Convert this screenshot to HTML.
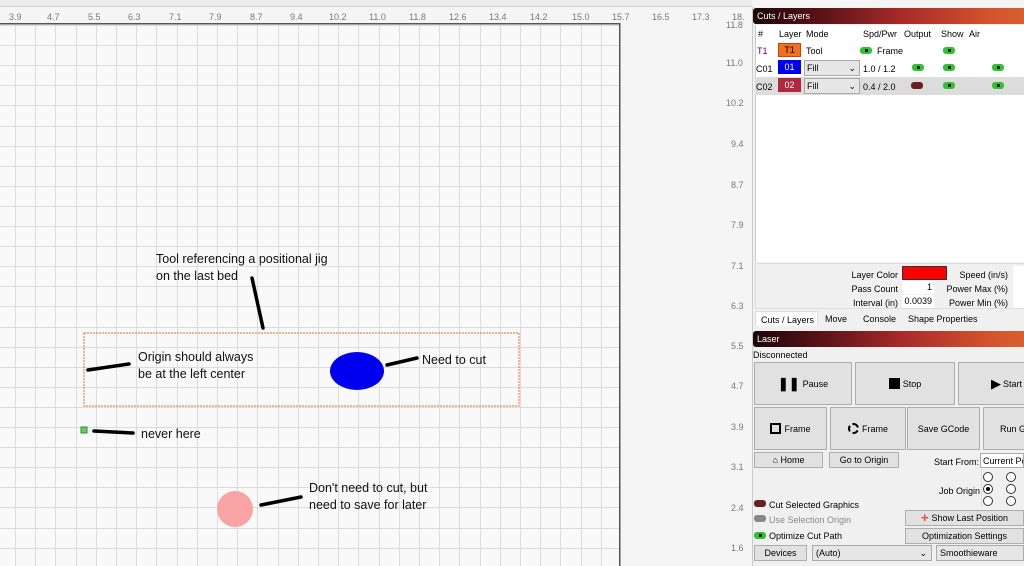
<!DOCTYPE html>
<html><head><meta charset="utf-8"><style>
*{margin:0;padding:0;box-sizing:border-box}
body{width:1024px;height:566px;overflow:hidden;background:#f5f5f5;font-family:"Liberation Sans",sans-serif;font-size:9px;color:#000;position:relative}
.a{position:absolute;white-space:nowrap}
.btn{position:absolute;background:#e1e1e1;border:1px solid #adadad;display:flex;align-items:center;justify-content:center;font-size:9px;white-space:nowrap;overflow:hidden}
.hdr{position:absolute;left:753px;width:271px;height:16px;background:linear-gradient(90deg,#1a0608,#5a1218 25%,#a82a2a 55%,#d0502c 85%,#d86030);color:#fff;font-size:9px;padding:3px 4px;border-radius:3px 0 0 3px}
.tg{position:absolute;width:12px;height:7px;border-radius:3px;background:#2cc62c}
.tg::after{content:"";position:absolute;left:5px;top:2px;width:3px;height:3px;background:#000}
.rad{position:absolute;width:10px;height:10px;border:1px solid #333;border-radius:50%;background:#fff}
.r{text-align:right}
</style></head><body>
<svg class="a" style="left:0;top:0" width="752" height="566" shape-rendering="crispEdges">
<rect x="0" y="0" width="752" height="7" fill="#ececec"/>
<line x1="0" y1="6.5" x2="752" y2="6.5" stroke="#d0d0d0"/>
<rect x="0" y="7" width="752" height="16" fill="#f5f5f5"/>
<rect x="0" y="24" width="620" height="542" fill="#f9f9f9"/>
<g stroke="#dcdcdc" stroke-width="1" id="grid"></g>
<line x1="0" y1="23.5" x2="620" y2="23.5" stroke="#555" stroke-width="1.5"/>
<line x1="619.5" y1="23" x2="619.5" y2="566" stroke="#555" stroke-width="1.5"/>
<g font-size="9" fill="#777" font-family="Liberation Sans">
<text x="9" y="20">3.9</text><text x="47" y="20">4.7</text><text x="88" y="20">5.5</text><text x="128" y="20">6.3</text><text x="169" y="20">7.1</text><text x="209" y="20">7.9</text><text x="250" y="20">8.7</text><text x="290" y="20">9.4</text><text x="329" y="20">10.2</text><text x="369" y="20">11.0</text><text x="409" y="20">11.8</text><text x="449" y="20">12.6</text><text x="489" y="20">13.4</text><text x="530" y="20">14.2</text><text x="572" y="20">15.0</text><text x="612" y="20">15.7</text><text x="652" y="20">16.5</text><text x="692" y="20">17.3</text><text x="732" y="20">18.</text>
<text x="726" y="28">11.8</text><text x="726" y="66">11.0</text><text x="726" y="106">10.2</text><text x="731" y="147">9.4</text><text x="731" y="188">8.7</text><text x="731" y="228">7.9</text><text x="731" y="269">7.1</text><text x="731" y="309">6.3</text><text x="731" y="349">5.5</text><text x="731" y="389">4.7</text><text x="731" y="430">3.9</text><text x="731" y="470">3.1</text><text x="731" y="511">2.4</text><text x="731" y="551">1.6</text>
</g>
<rect x="84" y="333" width="435" height="73" fill="none" stroke="#f07030" stroke-width="1" stroke-dasharray="2,1"/>
<g shape-rendering="auto">
<ellipse cx="357" cy="371" rx="27" ry="19" fill="#0000f0"/>
<circle cx="235" cy="509" r="18" fill="#f8a4a4"/>
<g stroke="#000" stroke-width="3.5" stroke-linecap="round">
<line x1="252" y1="278" x2="263" y2="328"/>
<line x1="88" y1="370" x2="129" y2="364"/>
<line x1="387" y1="365" x2="417" y2="358"/>
<line x1="94" y1="431" x2="133" y2="433"/>
<line x1="261" y1="505" x2="301" y2="497"/>
</g>
<g font-family="Liberation Sans" font-size="12.5" fill="#111">
<text x="156" y="263">Tool referencing a positional jig</text><text x="156" y="280">on the last bed</text>
<text x="138" y="361">Origin should always</text><text x="138" y="378">be at the left center</text>
<text x="422" y="364">Need to cut</text>
<text x="141" y="438">never here</text>
<text x="309" y="492">Don't need to cut, but</text><text x="309" y="509">need to save for later</text>
</g></g>
<rect x="81" y="427" width="6" height="6" fill="#6c6" stroke="#383"/>
</svg>
<script>
(function(){var g=document.getElementById('grid'),s='';
for(var i=0;i<31;i++){var x=Math.round(15+20.2*i)+0.5;if(x<619)s+='<line x1="'+x+'" y1="24" x2="'+x+'" y2="566"/>';}
for(var j=0;j<28;j++){var y=Math.round(25+20.1*j)+0.5;s+='<line x1="0" y1="'+y+'" x2="619" y2="'+y+'"/>';}
g.innerHTML=s;})();
</script>
<div class="a" style="left:752px;top:7px;width:272px;height:559px;background:#f0f0f0;border-left:1px solid #ccc"></div>
<div class="hdr" style="top:8px">Cuts / Layers</div>
<div class="a" style="left:755px;top:25px;width:269px;height:237px;background:#fff;border-left:1px solid #ccc"></div>
<div class="a" style="left:755px;top:77px;width:269px;height:18px;background:#dcdcdc"></div>
<div class="a" style="left:758px;top:29px">#</div>
<div class="a" style="left:779px;top:29px">Layer</div><div class="a" style="left:806px;top:29px">Mode</div>
<div class="a" style="left:863px;top:29px">Spd/Pwr</div><div class="a" style="left:904px;top:29px">Output</div><div class="a" style="left:941px;top:29px">Show</div><div class="a" style="left:969px;top:29px">Air</div>
<div class="a" style="left:757px;top:46px;color:#606">T1</div>
<div class="a" style="left:778px;top:43px;width:23px;height:14px;background:#f07020;border:1px solid #c40;text-align:center;line-height:12px">T1</div>
<div class="a" style="left:806px;top:46px">Tool</div>
<div class="tg" style="left:860px;top:47px"></div><div class="a" style="left:877px;top:46px">Frame</div>
<div class="tg" style="left:943px;top:47px"></div>
<div class="a" style="left:756px;top:64px">C01</div>
<div class="a" style="left:778px;top:60px;width:23px;height:14px;background:#0000f0;color:#fff;text-align:center;line-height:14px">01</div>
<div class="a" style="left:804px;top:60px;width:56px;height:16px;background:#e6e6e6;border:1px solid #aaa;padding:2px 2px">Fill<span style="position:absolute;right:3px">⌄</span></div>
<div class="a" style="left:863px;top:64px">1.0 / 1.2</div>
<div class="tg" style="left:912px;top:64px"></div><div class="tg" style="left:943px;top:64px"></div><div class="tg" style="left:992px;top:64px"></div>
<div class="a" style="left:756px;top:82px">C02</div>
<div class="a" style="left:778px;top:78px;width:23px;height:14px;background:#b02840;color:#fff;text-align:center;line-height:14px">02</div>
<div class="a" style="left:804px;top:78px;width:56px;height:16px;background:#e6e6e6;border:1px solid #aaa;padding:2px 2px">Fill<span style="position:absolute;right:3px">⌄</span></div>
<div class="a" style="left:863px;top:82px">0.4 / 2.0</div>
<div class="a" style="left:911px;top:82px;width:12px;height:7px;border-radius:3px;background:#6a2020"></div>
<div class="tg" style="left:943px;top:82px"></div><div class="tg" style="left:992px;top:82px"></div>
<div class="a" style="left:755px;top:263px;width:269px;height:46px;border:1px solid #ddd;border-right:0"></div>
<div class="a r" style="left:830px;top:270px;width:68px">Layer Color</div>
<div class="a" style="left:902px;top:266px;width:45px;height:14px;background:#f00;border:1px solid #333"></div>
<div class="a r" style="left:940px;top:270px;width:68px">Speed (in/s)</div>
<div class="a r" style="left:830px;top:284px;width:68px">Pass Count</div>
<div class="a" style="left:902px;top:281px;width:32px;height:13px;background:#fff;text-align:right;padding:1px 2px">1</div>
<div class="a r" style="left:930px;top:284px;width:78px">Power Max (%)</div>
<div class="a r" style="left:830px;top:298px;width:68px">Interval (in)</div>
<div class="a" style="left:902px;top:295px;width:32px;height:13px;background:#fff;text-align:right;padding:1px 2px">0.0039</div>
<div class="a r" style="left:930px;top:298px;width:78px">Power Min (%)</div>
<div class="a" style="left:1013px;top:266px;width:11px;height:42px;background:#fff"></div>
<div class="a" style="left:755px;top:311px;width:63px;height:15px;background:#fff;border:1px solid #ddd;border-bottom:0;padding:3px 5px">Cuts / Layers</div>
<div class="a" style="left:825px;top:314px">Move</div><div class="a" style="left:863px;top:314px">Console</div><div class="a" style="left:908px;top:314px">Shape Properties</div>
<div class="hdr" style="top:331px">Laser</div>
<div class="a" style="left:753px;top:350px">Disconnected</div>
<div class="btn" style="left:754px;top:362px;width:98px;height:43px"><b style="font-size:13px;margin-right:3px">❚❚</b>Pause</div>
<div class="btn" style="left:855px;top:362px;width:100px;height:43px"><span style="display:inline-block;width:11px;height:11px;background:#000;margin-right:3px"></span>Stop</div>
<div class="btn" style="left:958px;top:362px;width:70px;height:43px;justify-content:flex-start;padding-left:32px"><span style="font-size:13px;margin-right:2px">▶</span>Start</div>
<div class="btn" style="left:754px;top:407px;width:73px;height:43px"><span style="display:inline-block;width:11px;height:11px;border:2px dashed #000;margin-right:3px"></span>Frame</div>
<div class="btn" style="left:830px;top:407px;width:76px;height:43px"><span style="display:inline-block;width:11px;height:11px;border:2px dashed #000;border-radius:50%;margin-right:3px"></span>Frame</div>
<div class="btn" style="left:907px;top:407px;width:73px;height:43px">Save GCode</div>
<div class="btn" style="left:983px;top:407px;width:45px;height:43px;justify-content:flex-start;padding-left:16px">Run GC</div>
<div class="btn" style="left:754px;top:452px;width:69px;height:16px">⌂ Home</div>
<div class="btn" style="left:829px;top:452px;width:70px;height:16px">Go to Origin</div>
<div class="a" style="left:934px;top:457px">Start From:</div>
<div class="a" style="left:980px;top:453px;width:44px;height:15px;background:#fff;border:1px solid #aaa;padding:2px;overflow:hidden">Current Pos</div>
<div class="a" style="left:981px;top:469px;width:43px;height:38px;border-left:1px solid #ddd"></div>
<div class="rad" style="left:983px;top:472px"></div><div class="rad" style="left:1006px;top:472px"></div>
<div class="rad" style="left:983px;top:484px"><div style="width:4px;height:4px;background:#000;border-radius:50%;margin:2px"></div></div><div class="rad" style="left:1006px;top:484px"></div>
<div class="rad" style="left:983px;top:496px"></div><div class="rad" style="left:1006px;top:496px"></div>
<div class="a" style="left:939px;top:486px">Job Origin</div>
<div class="a" style="left:754px;top:500px;width:12px;height:7px;border-radius:3px;background:#6a2020"></div><div class="a" style="left:769px;top:500px">Cut Selected Graphics</div>
<div class="a" style="left:754px;top:515px;width:12px;height:7px;border-radius:3px;background:#888"></div><div class="a" style="left:769px;top:515px;color:#888">Use Selection Origin</div>
<div class="tg" style="left:754px;top:532px"></div><div class="a" style="left:769px;top:531px">Optimize Cut Path</div>
<div class="btn" style="left:905px;top:510px;width:119px;height:16px"><span style="color:#e00;margin-right:3px">✛</span>Show Last Position</div>
<div class="btn" style="left:905px;top:528px;width:119px;height:16px">Optimization Settings</div>
<div class="btn" style="left:754px;top:545px;width:53px;height:16px">Devices</div>
<div class="a" style="left:812px;top:545px;width:120px;height:16px;background:#e6e6e6;border:1px solid #aaa;padding:2px 3px">(Auto)<span style="position:absolute;right:4px">⌄</span></div>
<div class="a" style="left:936px;top:545px;width:88px;height:16px;background:#e6e6e6;border:1px solid #aaa;padding:2px 3px">Smoothieware</div>
</body></html>
